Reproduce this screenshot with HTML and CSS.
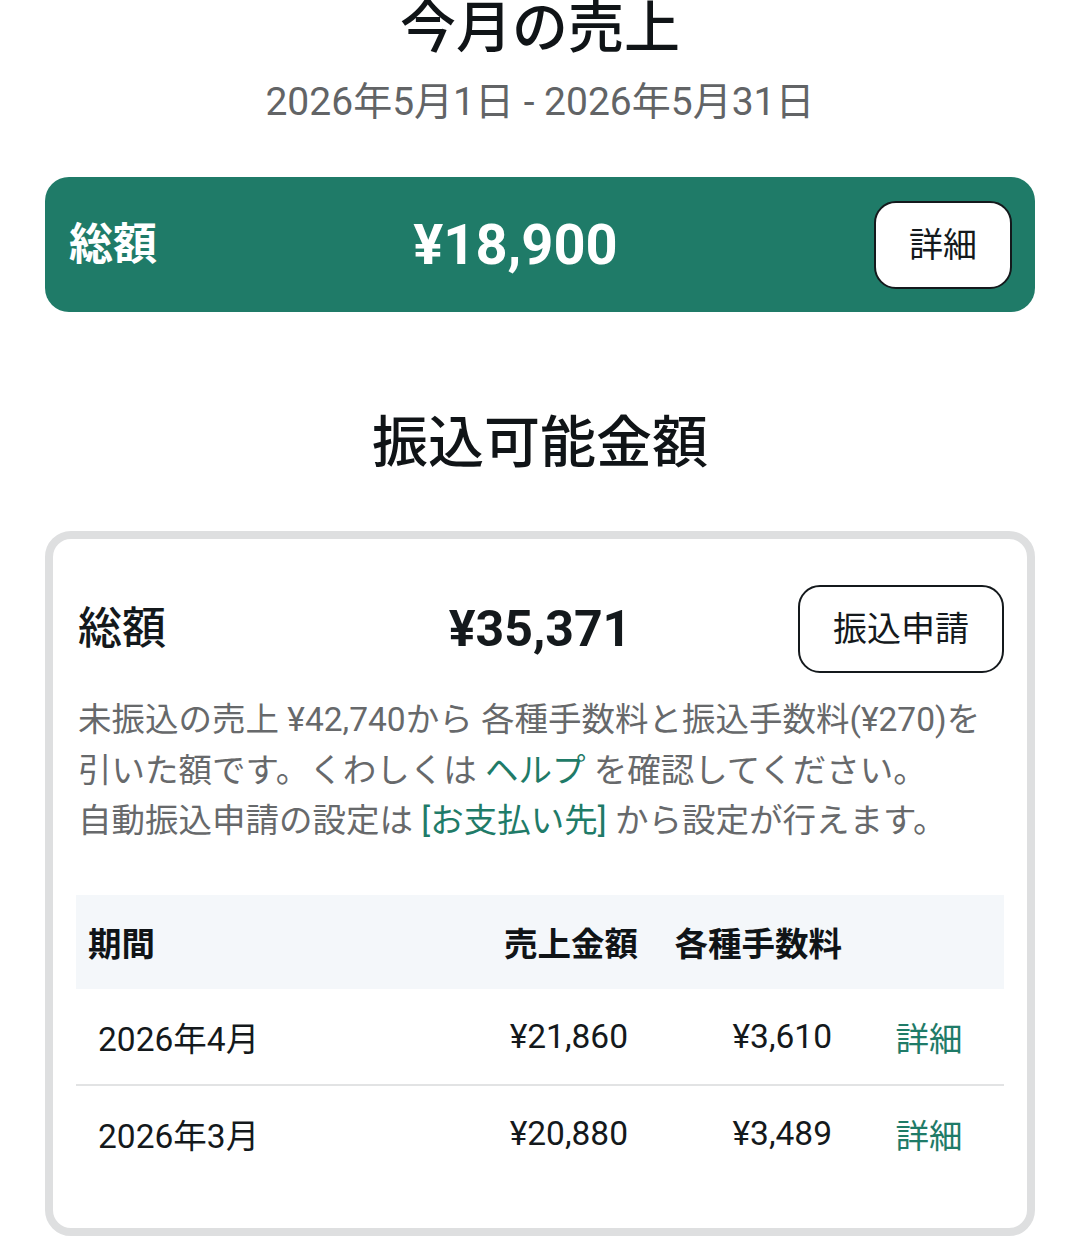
FILE: index.html
```html
<!DOCTYPE html>
<html lang="ja">
<head>
<meta charset="utf-8">
<title>売上</title>
<link rel="stylesheet" href="styles.css">
</head>
<body>
<main class="page">
  <h1 class="title">今月の売上</h1>
  <p class="period">2026年5月1日 - 2026年5月31日</p>

  <section class="banner">
    <span class="banner-label">総額</span>
    <span class="banner-amount">¥18,900</span>
    <button class="btn">詳細</button>
  </section>

  <h2 class="title title-2">振込可能金額</h2>

  <section class="card">
    <div class="card-head">
      <span class="card-label">総額</span>
      <span class="card-amount">¥35,371</span>
      <button class="btn btn-right">振込申請</button>
    </div>
    <p class="desc">未振込の売上 ¥42,740から 各種手数料と振込手数料(¥270)を<br>引いた額です。くわしくは <a class="link" href="#">ヘルプ</a> を確認してください。<br>自動振込申請の設定は <a class="link" href="#">[お支払い先]</a> から設定が行えます。</p>

    <div class="table">
      <div class="trow thead">
        <div class="cell c1">期間</div>
        <div class="cell c2">売上金額</div>
        <div class="cell c3">各種手数料</div>
        <div class="cell c4"></div>
      </div>
      <div class="trow tbody-row bordered">
        <div class="cell c1">2026年4月</div>
        <div class="cell c2">¥21,860</div>
        <div class="cell c3">¥3,610</div>
        <div class="cell c4"><a class="link" href="#">詳細</a></div>
      </div>
      <div class="trow tbody-row">
        <div class="cell c1">2026年3月</div>
        <div class="cell c2">¥20,880</div>
        <div class="cell c3">¥3,489</div>
        <div class="cell c4"><a class="link" href="#">詳細</a></div>
      </div>
    </div>
  </section>
</main>
</body>
</html>
```

FILE: styles.css
```css
* { box-sizing: border-box; }

html, body {
  margin: 0;
  padding: 0;
  background: #ffffff;
}

body {
  font-family: Roboto, "Noto Sans CJK JP", sans-serif;
  color: #14191c;
}

.page {
  padding: 0 45px 0;
}

.title {
  margin: 0;
  text-align: center;
  font-size: 56px;
  line-height: 56px;
  font-weight: 500;
  color: #101417;
}

.period {
  margin: 22px 0 0;
  text-align: center;
  font-size: 39px;
  line-height: 48px;
  color: #626466;
}

.banner {
  margin-top: 51px;
  height: 135px;
  background: #1f7b68;
  border-radius: 24px;
  display: flex;
  align-items: center;
  justify-content: space-between;
  padding: 0 23px 0 24px;
  color: #ffffff;
}

.banner-label {
  font-size: 44px;
  font-weight: 700;
  line-height: 1;
}

.banner-amount {
  font-size: 56px;
  font-weight: 700;
  line-height: 1;
}

.btn {
  font-family: Roboto, "Noto Sans CJK JP", sans-serif;
  font-size: 34px;
  line-height: 1;
  color: #14191c;
  background: #ffffff;
  border: 2px solid #14191c;
  border-radius: 22px;
  height: 88px;
  padding: 0 33px;
  cursor: pointer;
}

.title-2 {
  margin-top: 103px;
}

.card {
  margin-top: 60px;
  border: 8px solid #dedfe0;
  border-radius: 26px;
  padding: 46px 23px 46px;
}

.card-head {
  display: grid;
  grid-template-columns: 1fr auto 1fr;
  align-items: center;
}

.card-label {
  font-size: 44px;
  font-weight: 500;
  line-height: 1;
  padding-left: 2px;
}

.card-amount {
  font-size: 50px;
  font-weight: 700;
  line-height: 1;
}

.btn-right {
  justify-self: end;
}

.desc {
  margin: 22px 0 0;
  font-size: 33.5px;
  line-height: 50.5px;
  color: #67696b;
  padding-left: 2px;
  white-space: nowrap;
}

.link {
  color: #1f7b68;
  text-decoration: none;
}

.table {
  margin-top: 48px;
}

.trow {
  display: grid;
  grid-template-columns: 1fr 172px 204px 150px;
  align-items: center;
}

.cell { white-space: nowrap; }

.thead {
  height: 94px;
  background: #f4f7fa;
  font-size: 33.5px;
  font-weight: 700;
  color: #101417;
}

.thead .cell { padding: 0 12px; }

.tbody-row {
  height: 96px;
  font-size: 33.5px;
  color: #14191c;
}

.tbody-row .cell { padding: 0 22px; }

.bordered {
  border-bottom: 2px solid #e2e3e4;
  height: 97px;
}

.c1 { text-align: left; }
.c2, .c3 { text-align: right; }
.c4 { text-align: center; }
.tbody-row .c4 { padding: 0; }
```
